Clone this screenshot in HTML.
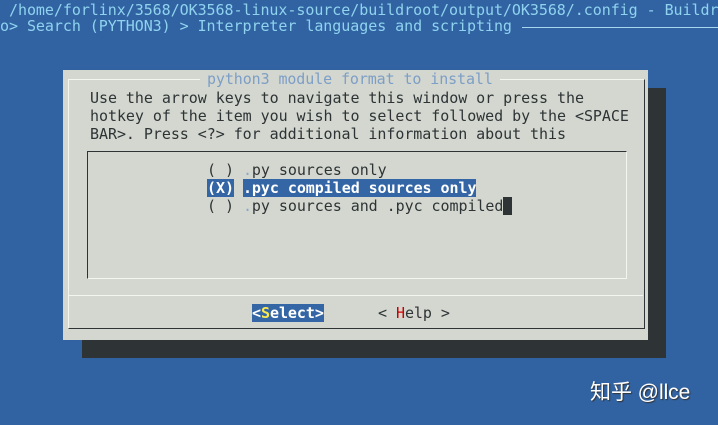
<!DOCTYPE html>
<html><head><meta charset="utf-8"><style>
body{margin:0;width:718px;height:425px;background:#3163a3;position:relative;overflow:hidden;font-family:"DejaVu Sans Mono","Liberation Mono",monospace;font-size:15px;letter-spacing:-0.05px;}
.t{position:absolute;white-space:pre;line-height:18px;}
.hd{color:#8fd3ee;}
</style></head><body>
<div class="t hd" style="left:0;top:1px"> /home/forlinx/3568/OK3568-linux-source/buildroot/output/OK3568/.config - Buildr</div>
<div class="t hd" style="left:0;top:17px">o> Search (PYTHON3) &gt; Interpreter languages and scripting</div>
<div style="position:absolute;left:522px;top:27px;width:196px;height:1px;background:#a8d8ee"></div>
<div style="position:absolute;left:82px;top:88px;width:584px;height:270px;background:#2e3436"></div>
<div style="position:absolute;left:63px;top:70px;width:585px;height:270px;background:#d3d7cf"></div>
<div style="position:absolute;left:68px;top:79px;width:575px;height:248px;border-top:1px solid #f4f4f0;border-left:1px solid #f4f4f0;border-right:1px solid #2e3436;border-bottom:1px solid #2e3436"></div>
<div style="position:absolute;left:200px;top:72px;width:300px;height:14px;background:#d3d7cf"></div>
<div class="t" style="left:207px;top:70px;color:#7d9ec6;letter-spacing:-0.1px">python3 module format to install</div>
<div class="t" style="left:90px;top:89px;color:#2e3436">Use the arrow keys to navigate this window or press the
hotkey of the item you wish to select followed by the &lt;SPACE
BAR&gt;. Press &lt;?&gt; for additional information about this</div>
<div style="position:absolute;left:87px;top:151px;width:538px;height:126px;border-top:1px solid #2e3436;border-left:1px solid #2e3436;border-right:1px solid #f4f4f0;border-bottom:1px solid #f4f4f0"></div>
<div class="t" style="left:207px;top:161px;color:#2e3436">( ) <span style="color:#8aa8c8">.</span>py sources only</div>
<div class="t" style="left:207px;top:179px;color:#fff;font-weight:bold"><span style="background:#3465a4">(X)</span> <span style="background:#3465a4">.pyc compiled sources only</span></div>
<div class="t" style="left:207px;top:197px;color:#2e3436">( ) <span style="color:#8aa8c8">.</span>py sources and .pyc compiled<span style="background:#2e3436">&nbsp;</span></div>
<div style="position:absolute;left:69px;top:295px;width:574px;height:1px;background:#f4f4f0"></div>
<div class="t" style="left:252px;top:304px;color:#fff;background:#3465a4;font-weight:bold">&lt;<span style="color:#fce94f">S</span>elect&gt;</div>
<div class="t" style="left:378px;top:304px;color:#2e3436">&lt; <span style="color:#cc0000">H</span>elp &gt;</div>
<div class="t" style="left:590px;top:380px;color:#fff;font-family:'Liberation Sans','Noto Sans CJK SC',sans-serif;font-size:21px;line-height:26px;text-shadow:1px 1px 1px #333">知乎 @llce</div>
</body></html>
